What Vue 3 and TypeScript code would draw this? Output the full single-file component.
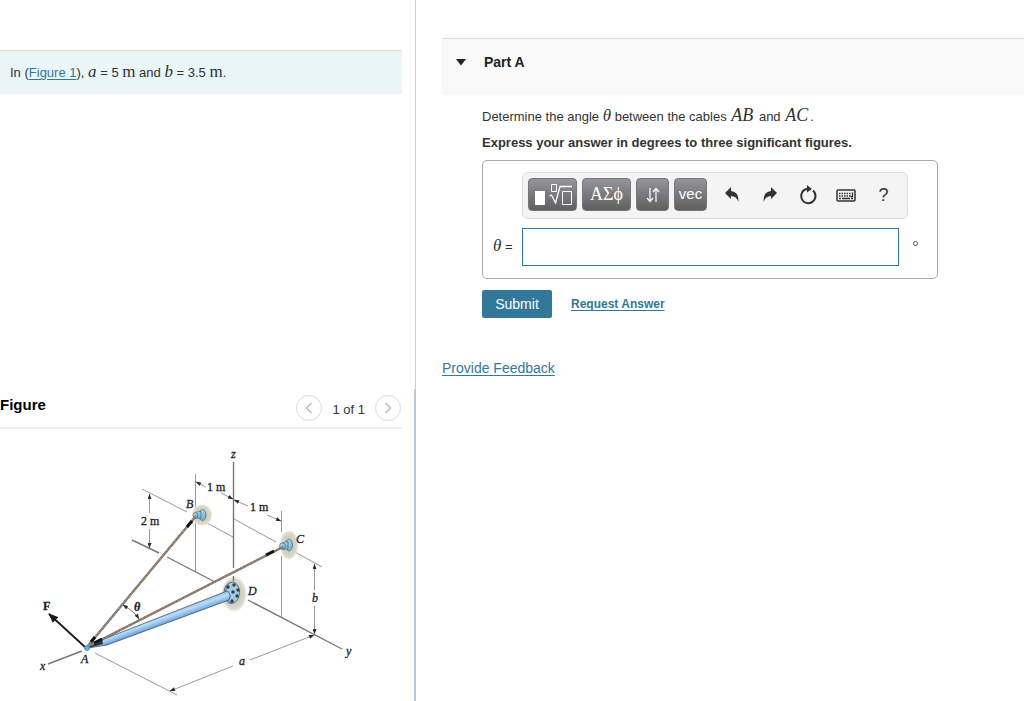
<script setup lang="ts">
import { ref } from 'vue'

interface Segment {
  x1: number
  y1: number
  x2: number
  y2: number
}

interface Label {
  text: string
  x: number
  y: number
  kind: string
}

const answer = ref('')
const expanded = ref(true)

const axes: Segment[] = [
  { x1: 233.5, y1: 462, x2: 233.5, y2: 568 },
  { x1: 132, y1: 540, x2: 159, y2: 553 },
  { x1: 167, y1: 557, x2: 215, y2: 582 },
  { x1: 248, y1: 600, x2: 342, y2: 649 },
  { x1: 48, y1: 664, x2: 82, y2: 651 },
]

const guides: Segment[] = [
  { x1: 142, y1: 489, x2: 187, y2: 512 },
  { x1: 207, y1: 523, x2: 233, y2: 537 },
  { x1: 195.5, y1: 474, x2: 195.5, y2: 508 },
  { x1: 195.5, y1: 521, x2: 195.5, y2: 572 },
  { x1: 234, y1: 519, x2: 276, y2: 542 },
  { x1: 281.5, y1: 511, x2: 281.5, y2: 532 },
  { x1: 281.5, y1: 556, x2: 281.5, y2: 617 },
  { x1: 293, y1: 551, x2: 322, y2: 567 },
  { x1: 95, y1: 653, x2: 177, y2: 695 },
]

const dimensions: Segment[] = [
  { x1: 149.5, y1: 513, x2: 149.5, y2: 494 },
  { x1: 149.5, y1: 529, x2: 149.5, y2: 548 },
  { x1: 206, y1: 487, x2: 196, y2: 482 },
  { x1: 221, y1: 493, x2: 233, y2: 499 },
  { x1: 248, y1: 506, x2: 234, y2: 500 },
  { x1: 267, y1: 515, x2: 281, y2: 521 },
  { x1: 314.5, y1: 590, x2: 314.5, y2: 564 },
  { x1: 314.5, y1: 606, x2: 314.5, y2: 634 },
  { x1: 233, y1: 666, x2: 170, y2: 691 },
  { x1: 250, y1: 660, x2: 314, y2: 635 },
]

const labels: Label[] = [
  { text: 'z', x: 231, y: 458, kind: 'italic' },
  { text: '1 m', x: 207, y: 491, kind: 'plain-label' },
  { text: '1 m', x: 250, y: 511, kind: 'plain-label' },
  { text: '2 m', x: 141, y: 525, kind: 'plain-label' },
  { text: 'B', x: 186, y: 508, kind: 'italic' },
  { text: 'C', x: 296, y: 543, kind: 'italic' },
  { text: 'D', x: 248, y: 595, kind: 'italic' },
  { text: 'b', x: 312, y: 602, kind: 'italic' },
  { text: 'F', x: 43, y: 610, kind: 'strong' },
  { text: 'θ', x: 134, y: 611, kind: 'angle' },
  { text: 'A', x: 81, y: 663, kind: 'italic' },
  { text: 'x', x: 40, y: 670, kind: 'italic' },
  { text: 'y', x: 346, y: 655, kind: 'italic' },
  { text: 'a', x: 239, y: 665, kind: 'italic' },
]

const bolts = [
  [228, 587], [234, 585], [238, 590], [237, 596], [232, 601], [233, 592],
]
</script>

<template>
  <div class="page">
    <div class="left">
      <section class="intro">
        <p class="given">
          In (<a href="#figure">Figure 1</a>), <i class="math">a</i> = 5 <span class="math">m</span> and
          <i class="math">b</i> = 3.5 <span class="math">m</span>.
        </p>
      </section>

      <section id="figure" class="figure">
        <header class="figure-head">
          <h2>Figure</h2>
          <nav class="pager" aria-label="Figures">
            <button type="button" class="round" aria-label="Previous figure">
              <svg width="10" height="14" viewBox="0 0 10 14"><path d="M7.5 2 2.5 7l5 5" /></svg>
            </button>
            <span>1 of 1</span>
            <button type="button" class="round" aria-label="Next figure">
              <svg width="10" height="14" viewBox="0 0 10 14"><path d="m2.5 2 5 5-5 5" /></svg>
            </button>
          </nav>
        </header>

        <svg class="diagram" viewBox="0 429 402 272" role="img" aria-label="Boom AD held by cables AB and AC">
          <defs>
            <marker id="tip" viewBox="0 0 8 6" refX="7.5" refY="3" markerWidth="7" markerHeight="4" orient="auto" markerUnits="userSpaceOnUse">
              <path d="M0 0 8 3 0 6z" fill="#2b2b2b" />
            </marker>
            <marker id="tip-big" viewBox="0 0 10 8" refX="9" refY="4" markerWidth="10" markerHeight="8" orient="auto" markerUnits="userSpaceOnUse">
              <path d="M0 0 10 4 0 8z" fill="#1b1b1b" />
            </marker>
            <radialGradient id="wall">
              <stop offset="0.6" stop-color="#d2cfbd" />
              <stop offset="0.85" stop-color="#dedccf" />
              <stop offset="1" stop-color="#f3f2ec" stop-opacity="0.4" />
            </radialGradient>
            <linearGradient id="boom" gradientUnits="userSpaceOnUse" x1="160" y1="615" x2="164" y2="626">
              <stop offset="0" stop-color="#8db9df" />
              <stop offset="0.35" stop-color="#bcdcf6" />
              <stop offset="0.7" stop-color="#80b4e2" />
              <stop offset="1" stop-color="#4778a8" />
            </linearGradient>
            <linearGradient id="steel" x1="0" y1="0" x2="1" y2="1">
              <stop offset="0" stop-color="#c6e6f4" />
              <stop offset="1" stop-color="#6aa5c4" />
            </linearGradient>
          </defs>

          <g class="guide"><line v-for="(s, i) in guides" :key="i" v-bind="s" /></g>
          <g class="axis"><line v-for="(s, i) in axes" :key="i" v-bind="s" /></g>
          <g class="dimension"><line v-for="(s, i) in dimensions" :key="i" v-bind="s" marker-end="url(#tip)" /></g>

          <ellipse cx="202" cy="515" rx="10.5" ry="11" fill="url(#wall)" />
          <ellipse cx="289" cy="545" rx="9.5" ry="15" fill="url(#wall)" />
          <ellipse cx="234" cy="594" rx="13" ry="18" fill="url(#wall)" />
          <path class="axis" d="M233.5 576v5" />

          <g class="socket">
            <ellipse cx="202.500" cy="515" rx="3.5" ry="5.5" />
            <path d="M195 512.5 201 511v8l-6-1.5z" />
            <ellipse cx="195.500" cy="515.500" rx="2.500" ry="3" />
            <ellipse cx="289" cy="545" rx="3.500" ry="6" />
            <path d="M282 543 288 541v8l-6 .5z" />
            <ellipse cx="282.500" cy="546" rx="3" ry="3" />
          </g>
          <g class="flange">
            <ellipse cx="231" cy="593" rx="7" ry="10.500" />
            <ellipse cx="232.500" cy="592.500" rx="7" ry="10.500" />
            <circle v-for="(b, i) in bolts" :key="i" :cx="b[0]" :cy="b[1]" r="1.700" />
          </g>

          <path class="boom" d="M88 648 104 639 227 591q5 3 2 9L107 645z" />
          <path class="boom-tip" d="m88 648 14-10 1 6z" />

          <path class="rope-edge" d="M87 647 196 516M87 647 283 547" />
          <path class="rope" d="M87 647 196 516M87 647 283 547" />
          <path class="rope-twist" d="M87 647 196 516M87 647 283 547" />
          <path class="clamp" d="m187 527 5-6M91 642l4-5M266 555l8-4M94 643l8-4" />

          <path class="arc" d="M124 606Q134 611 139 619" marker-end="url(#tip)" />
          <path class="arc" d="m126 607-3-2" marker-end="url(#tip)" />
          <path class="force" d="M85 647 49 614" marker-end="url(#tip-big)" />
          <circle cx="87" cy="648" r="2.500" fill="#58b5dd" stroke="#267ca3" stroke-width=".6" />

          <text v-for="(l, i) in labels" :key="i" :x="l.x" :y="l.y" :class="l.kind">{{ l.text }}</text>
        </svg>
      </section>
    </div>

    <main class="right">
      <header class="part-head">
        <button type="button" class="toggle" :aria-expanded="expanded" aria-label="Toggle Part A" @click="expanded = !expanded">
          <svg width="10" height="7" viewBox="0 0 10 7"><path d="M0 0h10L5 6.500z" fill="#222" /></svg>
        </button>
        <h1>Part A</h1>
      </header>

      <form v-show="expanded" class="part-body" @submit.prevent>
        <p class="question">
          Determine the angle <i class="math">θ</i> between the cables <i class="math pair">AB</i> and <i class="math pair">AC</i>.
        </p>
        <p class="instruction">Express your answer in degrees to three significant figures.</p>

        <div class="answer-box">
          <div class="toolbar" role="toolbar" aria-label="Math tools">
            <button type="button" class="dark wide" aria-label="Templates">
              <svg width="40" height="26" viewBox="0 0 40 26">
                <path d="M2 9h10v14H2z" fill="#fff" />
                <path d="M18.500 2.500h5v7h-5zM29.500 9.500h9v13h-9z" fill="none" stroke="#fff" />
                <path d="m16.500 14 2-1 4 8 4.500-16.500h12" fill="none" stroke="#fff" stroke-width="1.300" />
              </svg>
            </button>
            <button type="button" class="dark wide greek">ΑΣϕ</button>
            <button type="button" class="dark" aria-label="Sub and superscript arrows">
              <svg width="16" height="18" viewBox="0 0 16 18">
                <path d="M5 2v13M2 12l3 3.500L8 12M11 16V3M8 6l3-3.500L14 6" fill="none" stroke="#fff" stroke-width="1.200" />
              </svg>
            </button>
            <button type="button" class="dark vec">vec</button>
            <button type="button" class="plain" aria-label="Undo">
              <svg width="16" height="18" viewBox="0 0 16 18">
                <path d="M7 1v4q8 .5 7.500 11Q12.500 10 7 10v3L1 7z" />
              </svg>
            </button>
            <button type="button" class="plain" aria-label="Redo">
              <svg width="16" height="18" viewBox="0 0 16 18">
                <path d="M9 1v4q-8 .5-7.500 11Q3.500 10 9 10v3l6-6z" />
              </svg>
            </button>
            <button type="button" class="plain" aria-label="Reset">
              <svg width="18" height="20" viewBox="0 0 18 20">
                <path d="M14 5.500A7.200 7.200 0 1 1 8.500 3.800" fill="none" stroke="#333" stroke-width="2" />
                <path d="M8 0v7.500L13 4z" />
              </svg>
            </button>
            <button type="button" class="plain" aria-label="Keyboard shortcuts">
              <svg width="20" height="14" viewBox="0 0 20 14">
                <rect x="1" y="2" width="18" height="11" rx="1" fill="none" stroke="#333" stroke-width="1.500" />
                <path d="M3 5.500h12M3 8h12" stroke="#333" stroke-width="1.500" stroke-dasharray="1.500 1" />
                <path d="M3 10.500h2M6 10.500h8M15 10.500h2M16.500 4.500v4h-2" fill="none" stroke="#333" stroke-width="1.300" />
              </svg>
            </button>
            <button type="button" class="plain help" aria-label="Help">?</button>
          </div>
          <label for="answer"><i class="math">θ</i> =</label>
          <input id="answer" v-model="answer" type="text" autocomplete="off" />
          <svg class="unit" width="7" height="7" viewBox="0 0 7 7" role="img" aria-label="degrees">
            <circle cx="3.500" cy="3.500" r="2" fill="none" stroke="#555" />
          </svg>
        </div>

        <div class="actions">
          <button type="submit" class="submit">Submit</button>
          <a href="#request">Request Answer</a>
        </div>
      </form>

      <a class="feedback" href="#feedback">Provide Feedback</a>
    </main>
  </div>
</template>

<style>
body {
  margin: 0;
  background: #fff;
}
</style>

<style scoped>
.page {
  display: grid;
  grid-template-columns: 13fr 19fr;
  min-height: 100vh;
  overflow: hidden;
  font-family: "Liberation Sans", Arial, sans-serif;
  font-size: 13px;
  line-height: 18px;
  color: #333;
}
.page * {
  box-sizing: border-box;
}
button {
  margin: 0;
  padding: 0;
  border: 0;
  font: inherit;
  color: inherit;
  background: none;
  cursor: pointer;
}
h1,
h2,
p {
  margin: 0;
}
a {
  color: #31789a;
  text-decoration: underline;
  text-underline-offset: 2px;
}
.math {
  font-family: "Liberation Serif", "Times New Roman", serif;
  font-size: 17px;
  line-height: 16px;
}
.pair {
  margin: 0 2px 0 1px;
  font-size: 18px;
}

.left {
  display: flex;
  flex-direction: column;
  min-width: 0;
}
.intro {
  flex: 1;
  padding: 50px 13px 0 0;
  border-right: 1px solid #c5cedd;
}
.given {
  padding: 13px 10px 12px;
  border-top: 1px solid #ddd;
  background: #e9f5f7;
}

.figure {
  padding-right: 12px;
  border-right: 2px solid #bdcadd;
}
.figure-head {
  display: flex;
  align-items: center;
  justify-content: space-between;
  height: 40px;
  padding-right: 1px;
  border-bottom: 2px solid #eee;
}
.figure-head h2 {
  margin-top: -6px;
  font-size: 15px;
  color: #000;
}
.pager {
  display: flex;
  align-items: center;
  gap: 10px;
}
.round {
  display: grid;
  place-items: center;
  width: 26px;
  height: 26px;
  border: 1px solid #ddd;
  border-radius: 50%;
}
.round path {
  fill: none;
  stroke: #bbb;
  stroke-width: 1.5px;
}
.pager span {
  padding-top: 4px;
}

.diagram {
  display: block;
  width: 100%;
  font-family: "Liberation Serif", "Times New Roman", serif;
  font-size: 12px;
}
.diagram text {
  fill: #222;
  stroke: #222;
  stroke-width: 0.3px;
}
.diagram .italic {
  font-style: italic;
}
.diagram .strong {
  font-weight: bold;
}
.diagram .angle {
  font-style: italic;
  font-weight: bold;
}
.guide {
  stroke: #999;
}
.axis {
  stroke: #777;
  stroke-width: 1.4px;
}
.dimension {
  stroke: #999;
}
.socket {
  fill: url(#steel);
  stroke: #39718c;
  stroke-width: 0.7px;
}
.flange ellipse {
  fill: #a5cbe4;
  stroke: #3f5e73;
  stroke-width: 0.8px;
}
.flange circle {
  fill: #333d46;
}
.boom {
  fill: url(#boom);
  stroke: #3c5a76;
  stroke-width: 0.8px;
}
.boom-tip {
  fill: #26333d;
}
.rope-edge {
  stroke: #6c5d50;
  stroke-width: 2.3px;
}
.rope {
  stroke: #a3917f;
  stroke-width: 1.4px;
}
.rope-twist {
  stroke: #6d5c4e;
  stroke-width: 1px;
  stroke-dasharray: 1 3;
}
.clamp {
  stroke: #111;
  stroke-width: 3px;
}
.arc {
  fill: none;
  stroke: #555;
  stroke-width: 0.8px;
}
.force {
  stroke: #1b1b1b;
  stroke-width: 1.8px;
}

.right {
  min-width: 0;
  padding: 38px 0 24px 26px;
}
.part-head {
  display: flex;
  align-items: flex-start;
  gap: 18px;
  height: 57px;
  padding: 14px 14px 0;
  border-top: 1px solid #ddd;
  background: #f9f9f9;
}
.toggle {
  display: flex;
  align-items: center;
  height: 18px;
}
.part-head h1 {
  font-size: 14px;
  color: #222;
}
.part-body {
  padding: 12px 16px 0 40px;
}
.instruction {
  margin: 8px 0;
  font-weight: bold;
}
.answer-box {
  display: grid;
  grid-template-columns: 29px 1fr 28px;
  row-gap: 9px;
  align-items: center;
  max-width: 456px;
  padding: 11px 10px 12px;
  border: 1px solid #aaa;
  border-radius: 5px;
}
.toolbar {
  grid-column: 2 / 4;
  display: flex;
  align-items: center;
  gap: 5px;
  height: 47px;
  margin-right: 19px;
  padding: 0 5px 2px;
  border: 1px solid #ddd;
  border-radius: 6px;
  background: #f4f4f4;
}
.dark {
  display: grid;
  place-items: center;
  width: 33px;
  height: 33px;
  border: 1px solid #777;
  border-radius: 4px;
  background: linear-gradient(#94949b, #606060);
  color: #fff;
}
.wide {
  width: 49px;
}
.greek {
  padding-bottom: 2px;
  font-family: "Liberation Serif", "Times New Roman", serif;
  font-size: 18px;
}
.vec {
  padding-bottom: 2px;
  font-size: 15px;
}
.plain {
  display: grid;
  place-items: center;
  width: 33px;
  height: 33px;
  fill: #333;
}
.help {
  font-size: 18px;
}
.vec + .plain {
  margin-left: 3px;
}
input {
  width: 100%;
  height: 38px;
  padding: 0 8px;
  border: 1px solid #31789a;
  border-radius: 0;
  outline: none;
  font: inherit;
  font-size: 16px;
}
.unit {
  justify-self: end;
  margin: 0 8px 8px 0;
}
.actions {
  display: flex;
  align-items: center;
  gap: 19px;
  margin-top: 11px;
}
.submit {
  width: 70px;
  height: 28px;
  border-radius: 2px;
  background: #31789a;
  color: #fff;
  font-size: 14px;
}
.actions a {
  font-size: 12px;
  font-weight: bold;
}
.feedback {
  display: inline-block;
  margin-top: 41px;
  font-size: 14px;
}
</style>
